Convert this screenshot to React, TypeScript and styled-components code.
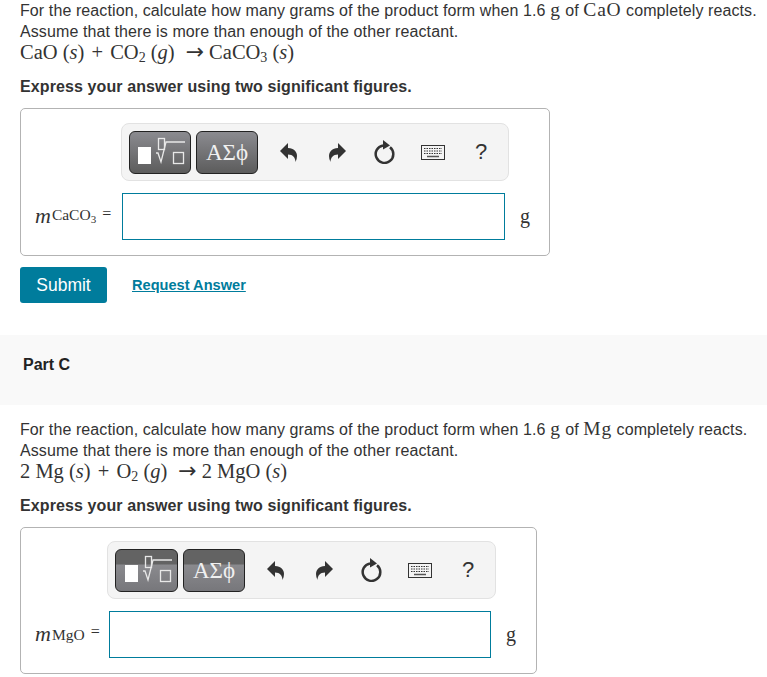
import React from 'react'
import styled, { createGlobalStyle } from 'styled-components'

const GlobalStyle = createGlobalStyle`
    html, body {
        margin: 0;
        padding: 0;
        background: #fff;
    }
    body {
        font-family: "Liberation Sans", Arial, sans-serif;
        font-size: 16px;
        color: #333;
    }
`

const Page = styled.div`
    width: 767px;
    height: 677px;
    overflow: hidden;
`

const Question = styled.section<{ $top?: number }>`
    padding: ${p => p.$top || 0}px 0 0 20px;
`

const Prompt = styled.p<{ $lineHeight?: number }>`
    margin: 0;
    font-size: 16px;
    line-height: ${p => p.$lineHeight || 21}px;
    letter-spacing: 0.1px;
    white-space: nowrap;
`

const Tex = styled.span`
    font-family: "Liberation Serif", "Times New Roman", serif;
    font-size: 19.5px;
    line-height: 0;
    letter-spacing: 0.8px;
    color: #333;
`

const Formula = styled.div`
    font-family: "Liberation Serif", "Times New Roman", serif;
    font-size: 20.5px;
    line-height: 21px;
    color: #333;
    white-space: pre;
    sub {
        font-size: 14px;
        line-height: 0;
        vertical-align: -3px;
    }
`

const Plus = styled.span`
    margin: 0 2px;
`

const Arrow = styled.span`
    font-family: "DejaVu Sans", sans-serif;
    font-size: 22px;
    line-height: 0;
    margin: 0 5px 0 11px;
`

const Instruction = styled.p`
    margin: 14px 0 11px;
    font-size: 16px;
    line-height: 20px;
    letter-spacing: 0.1px;
    font-weight: 700;
`

const AnswerBox = styled.div<{ $width: number; $labelWidth: number; $height: number; $padTop: number }>`
    box-sizing: border-box;
    width: ${p => p.$width}px;
    height: ${p => p.$height}px;
    border: 1px solid #b3b3b3;
    border-radius: 5px;
    padding: ${p => p.$padTop}px 0 0 14px;
    display: grid;
    grid-template-columns: ${p => p.$labelWidth}px auto 1fr;
    grid-template-rows: auto auto;
    align-content: start;
    row-gap: 12px;
`

const Toolbar = styled.div<{ $width: number; $offset: number }>`
    grid-column: 2 / 4;
    box-sizing: border-box;
    width: ${p => p.$width}px;
    height: 58px;
    margin-left: ${p => p.$offset}px;
    padding: 7px 0 0 7px;
    background: #f4f4f4;
    border: 1px solid #e2e2e2;
    border-radius: 8px;
    display: flex;
    align-items: flex-start;
    gap: 5px;
`

const TemplateButton = styled.div<{ $width: number; $banded: boolean }>`
    box-sizing: border-box;
    width: ${p => p.$width}px;
    height: 43px;
    border: 1px solid #222;
    border-radius: 6px;
    display: flex;
    align-items: center;
    justify-content: center;
    color: #f0f0f0;
    font-family: "Liberation Serif", "Times New Roman", serif;
    font-size: 23px;
    background: ${p =>
        p.$banded
            ? 'linear-gradient(#636363 0, #636363 14px, #8a8a8e 15px, #77777b 100%)'
            : 'linear-gradient(#8b8b90 0, #5c5c5c 100%)'};
`

const ToolIcons = styled.div<{ $left: number }>`
    display: flex;
    align-items: center;
    height: 42px;
    margin-left: ${p => p.$left}px;
    gap: 24px;
`

const ToolSlot = styled.div`
    width: 24px;
    display: flex;
    justify-content: center;
`

const HelpMark = styled.span`
    font-size: 22px;
    color: #333;
`

const Label = styled.div`
    font-family: "Liberation Serif", "Times New Roman", serif;
    display: flex;
    align-items: center;
    white-space: nowrap;
    color: #333;
    i {
        font-size: 22px;
        letter-spacing: 1px;
        position: relative;
        top: -1px;
    }
    sub {
        font-size: 15.5px;
        line-height: 0;
        vertical-align: -5px;
    }
    sub sub {
        font-size: 11px;
        vertical-align: -3px;
    }
    b {
        font-weight: 400;
        font-size: 16px;
        margin-left: 6px;
        position: relative;
        top: -3px;
    }
`

const AnswerInput = styled.input<{ $width: number }>`
    box-sizing: border-box;
    width: ${p => p.$width}px;
    height: 47px;
    padding: 0 6px;
    border: 1px solid #007c9c;
    outline: none;
    background: #fff;
`

const Unit = styled.div`
    font-family: "Liberation Serif", "Times New Roman", serif;
    font-size: 20px;
    color: #333;
    padding-left: 15px;
    display: flex;
    align-items: center;
`

const Actions = styled.div`
    display: flex;
    align-items: center;
    margin-top: 11px;
    gap: 25px;
`

const SubmitButton = styled.button`
    width: 87px;
    height: 36px;
    padding: 0;
    border: none;
    border-radius: 3px;
    background: #007c9c;
    color: #fff;
    font-family: "Liberation Sans", Arial, sans-serif;
    font-size: 17.5px;
`

const RequestLink = styled.a`
    color: #007c9c;
    font-size: 14.6px;
    font-weight: 700;
    text-decoration: underline;
`

const PartHeader = styled.div`
    box-sizing: border-box;
    height: 70px;
    margin: 32px 0 14px;
    padding: 19px 0 0 23px;
    background: #f9f9f9;
    color: #222;
    font-size: 16px;
    line-height: 22px;
    font-weight: 700;
`

const MathTemplateIcon = () => (
    <svg width="56" height="35" viewBox="0 0 56 35" fill="none">
        <rect x="6" y="12" width="13" height="17" fill="#fff" />
        <rect x="26.500" y="3.500" width="6" height="11" stroke="#e8e8e8" strokeWidth="1.300" />
        <path d="M24 18l2 0 3 9 5-20h19" stroke="#e8e8e8" strokeWidth="1.300" />
        <rect x="41.500" y="17.500" width="10" height="11" stroke="#e8e8e8" strokeWidth="1.300" />
    </svg>
)

const UndoIcon = () => (
    <svg width="18" height="19" viewBox="0 0 18 19">
        <path d="M0 8L8 0v5c6 0 9 4 9 8 0 2-0.500 4-1.500 6 0-4-2.500-7.500-7.500-7.500V16z" fill="#333" />
    </svg>
)

const RedoIcon = () => (
    <svg width="18" height="19" viewBox="0 0 18 19">
        <path d="M18 8L10 0v5c-6 0-9 4-9 8 0 2 0.500 4 1.500 6 0-4 2.500-7.500 7.500-7.500V16z" fill="#333" />
    </svg>
)

const ResetIcon = () => (
    <svg width="22" height="24" viewBox="0 0 22 24" fill="none">
        <path d="M16 7.200A8.800 8.800 0 1 1 9 5.400" stroke="#333" strokeWidth="2.500" />
        <path d="M9 0l7 5.500-7 4z" fill="#333" />
    </svg>
)

const KeyboardIcon = () => (
    <svg width="24" height="15" viewBox="0 0 24 15" fill="none">
        <rect x="0.500" y="0.500" width="23" height="14" fill="#f4f4f4" stroke="#333" />
        <path d="M3 3.500h18M3 6h18M3 8.500h18" stroke="#333" strokeWidth="1.200" strokeDasharray="1.500 1" />
        <path d="M6 11.500h12" stroke="#555" strokeWidth="1.500" />
    </svg>
)

interface AnswerProps {
    width: number
    height: number
    padTop: number
    labelWidth: number
    inputWidth: number
    toolbar: { width: number; offset: number }
    buttons: [number, number]
    banded: boolean
    iconLeft: number
    subscript: React.ReactNode
}

const Answer: React.FC<AnswerProps> = ({
    width,
    height,
    padTop,
    labelWidth,
    inputWidth,
    toolbar,
    buttons,
    banded,
    iconLeft,
    subscript,
}) => (
    <AnswerBox $width={width} $height={height} $labelWidth={labelWidth} $padTop={padTop}>
        <Toolbar $width={toolbar.width} $offset={toolbar.offset}>
            <TemplateButton $width={buttons[0]} $banded={banded}>
                <MathTemplateIcon />
            </TemplateButton>
            <TemplateButton $width={buttons[1]} $banded={banded}>
                ΑΣϕ
            </TemplateButton>
            <ToolIcons $left={iconLeft}>
                <ToolSlot>
                    <UndoIcon />
                </ToolSlot>
                <ToolSlot>
                    <RedoIcon />
                </ToolSlot>
                <ToolSlot>
                    <ResetIcon />
                </ToolSlot>
                <ToolSlot>
                    <KeyboardIcon />
                </ToolSlot>
                <ToolSlot>
                    <HelpMark>?</HelpMark>
                </ToolSlot>
            </ToolIcons>
        </Toolbar>
        <Label>
            <i>m</i>
            <sub>{subscript}</sub>
            <b>=</b>
        </Label>
        <AnswerInput $width={inputWidth} />
        <Unit>g</Unit>
    </AnswerBox>
)

export default function App() {
    return (
        <Page>
            <GlobalStyle />
            <Question $top={1}>
                <Prompt $lineHeight={20}>
                    For the reaction, calculate how many grams of the product form when 1.6 <Tex>g</Tex> of <Tex>CaO</Tex> completely reacts.
                </Prompt>
                <Prompt>Assume that there is more than enough of the other reactant.</Prompt>
                <Formula>
                    CaO (<i>s</i>) <Plus>+</Plus> CO<sub>2</sub> (<i>g</i>)<Arrow>→</Arrow>CaCO<sub>3</sub> (<i>s</i>)
                </Formula>
                <Instruction>Express your answer using two significant figures.</Instruction>
                <Answer
                    width={530}
                    height={148}
                    padTop={14}
                    labelWidth={87}
                    inputWidth={383}
                    toolbar={{ width: 388, offset: -1 }}
                    buttons={[62, 62]}
                    banded={false}
                    iconLeft={14}
                    subscript={<>CaCO<sub>3</sub></>}
                />
                <Actions>
                    <SubmitButton>Submit</SubmitButton>
                    <RequestLink>Request Answer</RequestLink>
                </Actions>
            </Question>
            <PartHeader>Part C</PartHeader>
            <Question>
                <Prompt>
                    For the reaction, calculate how many grams of the product form when 1.6 <Tex>g</Tex> of <Tex>Mg</Tex> completely reacts.
                </Prompt>
                <Prompt>Assume that there is more than enough of the other reactant.</Prompt>
                <Formula>
                    2 Mg (<i>s</i>) <Plus>+</Plus> O<sub>2</sub> (<i>g</i>)<Arrow>→</Arrow>2 MgO (<i>s</i>)
                </Formula>
                <Instruction>Express your answer using two significant figures.</Instruction>
                <Answer
                    width={517}
                    height={147}
                    padTop={13}
                    labelWidth={74}
                    inputWidth={382}
                    toolbar={{ width: 389, offset: -2 }}
                    buttons={[63, 62]}
                    banded={true}
                    iconLeft={14}
                    subscript="MgO"
                />
            </Question>
        </Page>
    )
}
